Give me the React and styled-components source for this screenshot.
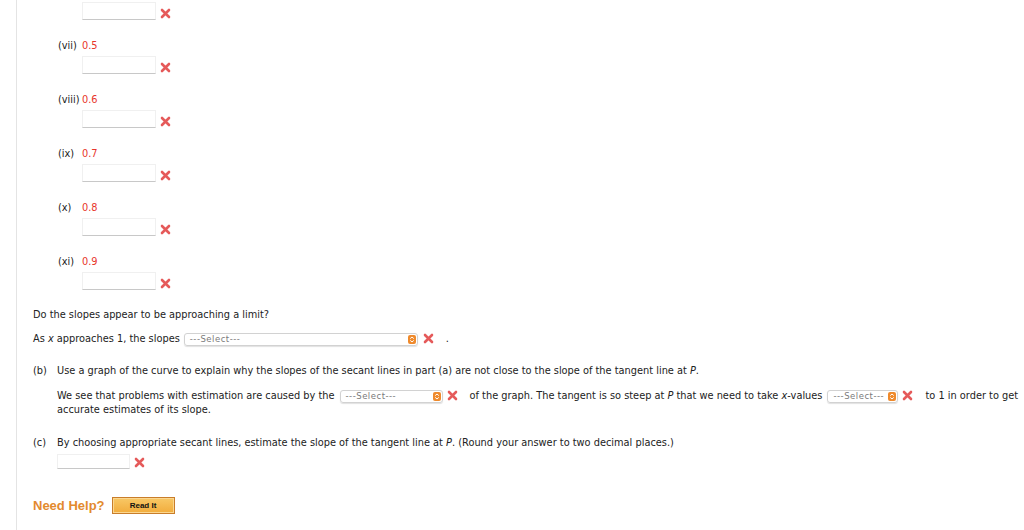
import React from "react";
import styled, { createGlobalStyle } from "styled-components";

const Global = createGlobalStyle`
  html, body { margin: 0; padding: 0; background: #fff; }
  body { font-family: "DejaVu Sans", Verdana, sans-serif; font-size: 9.8px; color: #222; }
`;

const Page = styled.div`
  width: 1024px;
  height: 530px;
  overflow: hidden;
  box-sizing: border-box;
  padding-left: 16px;
`;

const Frame = styled.div`
  border-left: 1px solid #e4e4e4;
  height: 100%;
  box-sizing: border-box;
  padding: 2px 0 0 16px;
`;

const SubList = styled.div`
  padding-left: 25px;
  display: flex;
  flex-direction: column;
`;

const Item = styled.div`
  display: flex;
  flex-direction: column;
  margin-bottom: 18px;
`;

const LabelRow = styled.div`
  display: flex;
  height: 14px;
  line-height: 14px;
  margin: 1px 0 3px;
`;

const Roman = styled.span`
  width: 24px;
`;

const Value = styled.span`
  color: #e8352b;
`;

const AnswerRow = styled.div`
  display: flex;
  align-items: flex-end;
  padding-left: ${(p) => p.$indent || 0}px;
  margin-top: ${(p) => p.$mt || 0}px;
`;

const Input = styled.div`
  width: ${(p) => p.$w || 72}px;
  height: ${(p) => p.$h || 16}px;
  border: 1px solid #f0f0f0;
  border-bottom: 1px solid #c8c8c8;
  box-sizing: content-box;
`;

const XWrap = styled.span`
  display: inline-flex;
  width: 11px;
  height: 11px;
  margin: 0 ${(p) => p.$mr || 0}px 1px ${(p) => p.$ml || 4}px;
  vertical-align: middle;
`;

const XMark = (props) => (
  <XWrap {...props}>
    <svg width="11" height="11" viewBox="0 0 11 11">
      <path d="M2 2 L9 9 M9 2 L2 9" stroke="#e55a5a" strokeWidth="2.6" strokeLinecap="round" />
    </svg>
  </XWrap>
);

const Para = styled.div`
  line-height: 14px;
  margin-top: ${(p) => p.$mt || 0}px;
  white-space: nowrap;
  display: flex;
  align-items: center;
`;

const Part = styled.div`
  display: flex;
  margin-top: ${(p) => p.$mt || 0}px;
  line-height: 14px;
`;

const PartLabel = styled.span`
  width: 24px;
  flex: none;
`;

const PartBody = styled.div`
  display: flex;
  flex-direction: column;
`;

const SelectBox = styled.span`
  display: inline-flex;
  align-items: center;
  justify-content: space-between;
  width: ${(p) => p.$w}px;
  height: 13px;
  box-sizing: border-box;
  border: 1px solid #d2d2d2;
  border-radius: 3px;
  box-shadow: 0 1px 1px rgba(0, 0, 0, 0.12);
  padding: 0 1px 0 5px;
  margin-left: ${(p) => p.$ml || 4}px;
  font-family: "DejaVu Sans", Verdana, sans-serif;
  font-size: 8.5px;
  letter-spacing: 0.5px;
  color: #7a7a7a;
  vertical-align: middle;
`;

const Spin = styled.span`
  width: 8px;
  height: 9px;
  border-radius: 2px;
  background: #ef8a2c;
  display: inline-flex;
  align-items: center;
  justify-content: center;
`;

const Select = ({ w, ml }) => (
  <SelectBox $w={w} $ml={ml}>
    ---Select---
    <Spin>
      <svg width="6" height="7" viewBox="0 0 6 7">
        <path d="M1.2 2.6 L3 1 L4.8 2.6 M1.2 4.4 L3 6 L4.8 4.4" stroke="#fff" strokeWidth="1" fill="none" />
      </svg>
    </Spin>
  </SelectBox>
);

const HelpRow = styled.div`
  display: flex;
  align-items: center;
  margin-top: 28px;
  gap: 7px;
`;

const HelpText = styled.span`
  font-family: "Liberation Sans", Arial, sans-serif;
  font-weight: bold;
  font-size: 13px;
  color: #e38a2e;
`;

const ReadBtn = styled.span`
  display: inline-flex;
  align-items: center;
  justify-content: center;
  width: 63px;
  height: 17px;
  box-sizing: border-box;
  border: 1px solid #c97d2a;
  box-shadow: inset 0 0 0 1px #fbd78f;
  background: linear-gradient(#f8c866, #f2ac3c);
  font-family: "Liberation Sans", Arial, sans-serif;
  font-weight: bold;
  font-size: 8px;
  color: #111;
`;

const items = [
  ["(vii)", "0.5"],
  ["(viii)", "0.6"],
  ["(ix)", "0.7"],
  ["(x)", "0.8"],
  ["(xi)", "0.9"],
];

export default function App() {
  return (
    <>
      <Global />
      <Page>
        <Frame>
          <SubList>
            <Item>
              <AnswerRow $indent={24}>
                <Input />
                <XMark $ml={4} />
              </AnswerRow>
            </Item>
            {items.map(([r, v]) => (
              <Item key={r}>
                <LabelRow>
                  <Roman>{r}</Roman>
                  <Value>{v}</Value>
                </LabelRow>
                <AnswerRow $indent={24}>
                  <Input />
                  <XMark $ml={4} />
                </AnswerRow>
              </Item>
            ))}
          </SubList>
          <Para $mt={0}>Do the slopes appear to be approaching a limit?</Para>
          <Para $mt={10}>
            As&nbsp;<i>x</i>&nbsp;approaches 1, the slopes
            <Select w={234} ml={4} />
            <XMark $ml={5} $mr={12} />.
          </Para>
          <Part $mt={18}>
            <PartLabel>(b)</PartLabel>
            <PartBody>
              <span>
                Use a graph of the curve to explain why the slopes of the secant lines in part (a) are not close to the slope of
                the tangent line at <i>P</i>.
              </span>
              <Para $mt={11}>
                We see that problems with estimation are caused by the
                <Select w={103} ml={5} />
                <XMark $ml={4} $mr={12} />
                of the graph. The tangent is so steep at&nbsp;<i>P</i>&nbsp;that we need to take&nbsp;<i>x</i>-values
                <Select w={71} ml={5} />
                <XMark $ml={4} $mr={12} />
                to 1 in order to get
              </Para>
              <span>accurate estimates of its slope.</span>
            </PartBody>
          </Part>
          <Part $mt={19}>
            <PartLabel>(c)</PartLabel>
            <PartBody>
              <span>
                By choosing appropriate secant lines, estimate the slope of the tangent line at <i>P</i>. (Round your answer to
                two decimal places.)
              </span>
              <AnswerRow $mt={4}>
                <Input $w={71} $h={13} />
                <XMark $ml={4} />
              </AnswerRow>
            </PartBody>
          </Part>
          <HelpRow>
            <HelpText>Need Help?</HelpText>
            <ReadBtn>Read It</ReadBtn>
          </HelpRow>
        </Frame>
      </Page>
    </>
  );
}
